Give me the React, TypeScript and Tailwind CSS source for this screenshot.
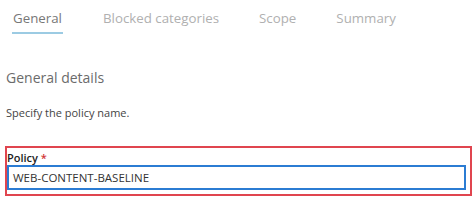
export default function App() {
  const font = { fontFamily: '"Open Sans", "Noto Sans", sans-serif' };
  return (
    <div className="w-[474px] h-[205px] bg-white overflow-hidden" style={font}>
      <div className="flex items-start pl-[12px] pt-[8px] gap-[40px] text-[13.3px] leading-[20px]">
        <div className="flex flex-col items-center">
          <span className="text-[#777777] px-[1px]">General</span>
          <div className="mt-[4px] h-[2px] w-full bg-[#9ccbe3]"></div>
        </div>
        <span className="text-[#b0b0b0]">Blocked categories</span>
        <span className="text-[#b0b0b0]">Scope</span>
        <span className="text-[#b0b0b0]">Summary</span>
      </div>
      <div className="pl-[6px] mt-[34px] text-[14px] leading-[20px] text-[#6b6b6b]">General details</div>
      <div className="pl-[6px] mt-[17px] text-[11px] leading-[16px] text-[#444444]">Specify the policy name.</div>
      <div className="ml-[5px] mr-[2px] mt-[25px] h-[50px] border-2 border-[#e0454f] pr-[4px]">
        <div className="h-[17px] pt-[2px] text-[11px] leading-[15px] text-[#222222] font-semibold">
          Policy <span className="text-[#d13438]">*</span>
        </div>
        <div className="h-[25px] border-2 border-[#2b7cd3] flex items-center pl-[4px] text-[11.5px] text-[#333333]">
          WEB-CONTENT-BASELINE
        </div>
      </div>
    </div>
  );
}
